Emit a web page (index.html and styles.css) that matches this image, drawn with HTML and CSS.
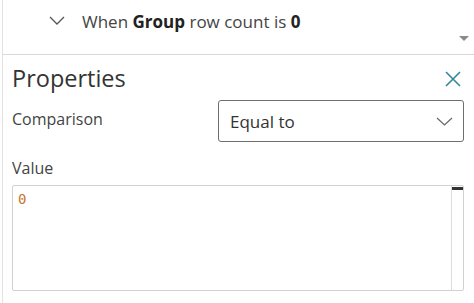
FILE: index.html
```html
<!DOCTYPE html>
<html lang="en">
<head>
  <meta charset="UTF-8" />
  <title>Properties</title>
  <link rel="stylesheet" href="styles.css">
</head>
<body>
  <div class="pane">
    <div class="rule-row">
      <svg class="chevron" width="16" height="9" viewBox="0 0 16 9">
        <path d="M1 1 L8 8 L15 1" fill="none" stroke="#555" stroke-width="1.3"/>
      </svg>
      <span class="rule-text">When <b>Group</b> row count is <b>0</b></span>
      <span class="scroll-arrow"></span>
    </div>

    <div class="props">
      <div class="props-head">
        <h2>Properties</h2>
        <svg class="close" width="16" height="16" viewBox="0 0 16 16">
          <path d="M1 1 L15 15 M15 1 L1 15" stroke="#2f8a9c" stroke-width="1.6"/>
        </svg>
      </div>

      <div class="field-row">
        <label>Comparison</label>
        <div class="select">
          <span>Equal to</span>
          <svg width="17" height="9" viewBox="0 0 17 9">
            <path d="M1 1 L8.5 8 L16 1" fill="none" stroke="#666" stroke-width="1.2"/>
          </svg>
        </div>
      </div>

      <label class="value-label">Value</label>
      <div class="textarea">
        <span class="code">0</span>
        <div class="scrollbar"><span class="thumb"></span></div>
      </div>
    </div>
  </div>
</body>
</html>
```

FILE: styles.css
```css
body {
  margin: 0;
  padding-left: 2px;
  font-family: 'Open Sans', sans-serif;
  color: #3b3b3b;
  background: #fff;
}

.pane {
  border-left: 1px solid #e2e2e2;
  height: 303px;
}

.rule-row {
  height: 54px;
  display: flex;
  align-items: center;
  border-bottom: 1px solid #d8d8d8;
  padding-left: 46px;
}

.chevron {
  margin-right: 17px;
  margin-top: -14px;
}

.rule-text {
  font-size: 17px;
  color: #444;
  margin-top: -12px;
}

.rule-text b {
  color: #222;
}

.scroll-arrow {
  margin-left: auto;
  margin-right: 5px;
  align-self: flex-end;
  margin-bottom: 13px;
  width: 0;
  height: 0;
  border-left: 5px solid transparent;
  border-right: 5px solid transparent;
  border-top: 5px solid #8a8a8a;
}

.props {
  padding: 0 10px 0 9px;
}

.props-head {
  display: flex;
  justify-content: space-between;
  align-items: center;
  height: 45px;
}

.props-head h2 {
  margin: 0;
  font-size: 23.5px;
  font-weight: 400;
  color: #333;
}

.close {
  margin-right: 3px;
  margin-top: 2px;
}

.field-row {
  display: flex;
  align-items: center;
  justify-content: space-between;
}

.field-row label {
  font-size: 16px;
  color: #444;
  margin-top: -4px;
}

.select {
  width: 246px;
  height: 42px;
  border: 1px solid #6e6e6e;
  border-radius: 3px;
  display: flex;
  align-items: center;
  justify-content: space-between;
  padding: 0 10px 0 11px;
  box-sizing: border-box;
}

.select span {
  font-size: 17px;
  color: #333;
}

.value-label {
  display: block;
  font-size: 16px;
  color: #444;
  margin-top: 15px;
}

.textarea {
  height: 106px;
  border: 1px solid #d2d2d2;
  border-radius: 2px;
  margin-top: 6px;
  display: flex;
  box-sizing: border-box;
}

.code {
  flex: 1;
  font-family: 'DejaVu Sans Mono', monospace;
  font-size: 14px;
  color: #c8742c;
  padding: 5px 0 0 5px;
}

.scrollbar {
  width: 11px;
  border-left: 1px solid #dcdcdc;
}

.thumb {
  display: block;
  height: 3px;
  background: #333;
  margin-top: 1px;
}
```
